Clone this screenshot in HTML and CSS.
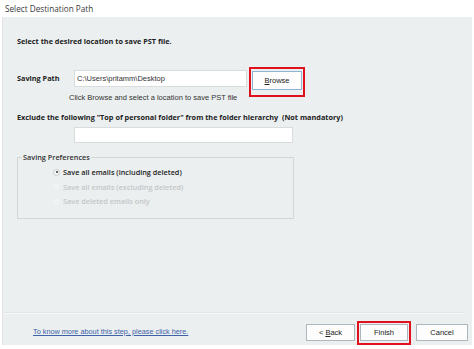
FILE: index.html
```html
<!DOCTYPE html>
<html lang="en">
<head>
    <meta charset="UTF-8">
    <meta name="viewport" content="width=device-width, initial-scale=1.0">
    <title>Select Destination Path</title>
    <link rel="stylesheet" href="styles.css">
</head>
<body>
    <div class="window">
        <div class="titlebar">Select Destination Path</div>
        <div class="panel">
            <div class="intro">Select the desired location to save PST file.</div>

            <div class="path-row">
                <span class="label">Saving Path</span>
                <input class="text-input path-input" type="text" value="C:\Users\pritamm\Desktop">
                <span class="mark mark-browse"><button class="btn btn-browse"><u>B</u>rowse</button></span>
            </div>
            <div class="hint">Click Browse and select a location to save PST file</div>

            <div class="exclude">Exclude the following "Top of personal folder" from the folder hierarchy&nbsp; (Not mandatory)</div>
            <input class="text-input exclude-input" type="text">

            <fieldset class="prefs">
                <legend>Saving Preferences</legend>
                <label class="radio"><span class="dot checked"></span>Save all emails (including deleted)</label>
                <label class="radio disabled"><span class="dot"></span>Save all emails (excluding deleted)</label>
                <label class="radio disabled"><span class="dot"></span>Save deleted emails only</label>
            </fieldset>

            <div class="spacer"></div>
            <div class="separator"></div>

            <div class="footer">
                <a class="help-link" href="#">To know more about this step, please click here.</a>
                <div class="buttons">
                    <button class="btn btn-back">&lt; <u>B</u>ack</button>
                    <span class="mark mark-finish"><button class="btn btn-finish">Finish</button></span>
                    <button class="btn btn-cancel">Cancel</button>
                </div>
            </div>
        </div>
    </div>
</body>
</html>
```

FILE: styles.css
```css
body {
    margin: 0;
    background: #ffffff;
    font-family: "Open Sans", "Noto Sans", sans-serif;
    font-size: 7.3px;
    color: #222;
}
.window {
    width: 474px;
    height: 349px;
    display: flex;
    flex-direction: column;
}
.titlebar {
    height: 17px;
    line-height: 18px;
    padding-left: 5px;
    font-size: 8.2px;
    color: #3a3a3a;
}
.panel {
    height: 328px;
    margin: 0 2px;
    background: #ebeff0;
    border-left: 1px solid #e0e4e5;
    display: flex;
    flex-direction: column;
    padding-left: 14px;
    box-sizing: border-box;
}
.intro {
    margin-top: 17px;
    font-weight: bold;
    line-height: 14px;
}
.path-row {
    margin-top: 19px;
    display: flex;
    align-items: flex-start;
}
.label {
    width: 57px;
    font-weight: bold;
    margin-top: 4px;
    line-height: 14px;
}
.text-input {
    box-sizing: border-box;
    height: 17px;
    border: 1px solid #d9dcdd;
    background: #fff;
    font-family: "Liberation Sans", Arial, sans-serif;
    font-size: 7.5px;
    padding: 0 2px;
    color: #333;
}
.path-input {
    width: 173px;
    margin-top: 3px;
}
.mark {
    display: inline-block;
    border: 2px solid #e0101c;
}
.mark-browse {
    margin-left: 2px;
    padding: 2px 1px 5px 1px;
}
.btn {
    box-sizing: border-box;
    height: 19px;
    background: #fdfdfd;
    border: 1px solid #adb7bd;
    font-family: "Liberation Sans", Arial, sans-serif;
    font-size: 7.5px;
    color: #222;
    padding: 0;
}
.btn-browse {
    width: 50px;
    border-color: #8fb5d4;
}
.hint {
    margin-left: 52px;
    margin-top: -4px;
    font-family: "Liberation Sans", Arial, sans-serif;
    font-size: 7.5px;
    color: #333;
    line-height: 10px;
}
.exclude {
    margin-top: 8px;
    font-weight: bold;
    line-height: 12px;
}
.exclude-input {
    width: 219px;
    height: 16px;
    margin-left: 57px;
    margin-top: 4px;
}
.prefs {
    margin: 9px 0 0 0;
    width: 277px;
    height: 67px;
    box-sizing: border-box;
    border: 1px solid #d3d7d8;
    padding: 3px 0 0 0;
}
.prefs legend {
    padding: 0 1px;
    margin-left: 4px;
    font-weight: 600;
    color: #333;
}
.radio {
    display: flex;
    align-items: center;
    height: 14.5px;
    margin-left: 35px;
    font-weight: 600;
    color: #222;
}
.radio.disabled {
    color: #c3c7c8;
}
.dot {
    box-sizing: border-box;
    width: 7px;
    height: 7px;
    border-radius: 50%;
    border: 1px solid #c8cdd0;
    background: #f4f6f7;
    margin-right: 3px;
    position: relative;
}
.radio.disabled .dot {
    border-color: #f0f3f4;
    background: #f0f3f4;
}
.dot.checked::after {
    content: "";
    position: absolute;
    left: 1.5px;
    top: 1.5px;
    width: 2px;
    height: 2px;
    border-radius: 50%;
    background: #333;
}
.spacer {
    flex: 1;
}
.separator {
    height: 1px;
    margin-left: -14px;
    margin-right: 7px;
    background: #f7f8f8;
    border-top: 1px solid #e2e5e6;
}
.footer {
    height: 31px;
    display: flex;
    align-items: center;
    justify-content: space-between;
    padding-right: 4px;
}
.help-link {
    margin-left: 16px;
    margin-top: 4px;
    font-family: "Liberation Sans", Arial, sans-serif;
    font-size: 7.3px;
    color: #3d62a8;
}
.buttons {
    display: flex;
    align-items: center;
    margin-top: 6px;
}
.buttons .btn {
    height: 17px;
}
.btn-back {
    width: 49px;
}
.btn-finish {
    width: 48px;
}
.mark-finish {
    margin-left: 2px;
    padding: 1px 1px 2px 1px;
}
.btn-cancel {
    width: 52px;
    margin-left: 5px;
}
```
